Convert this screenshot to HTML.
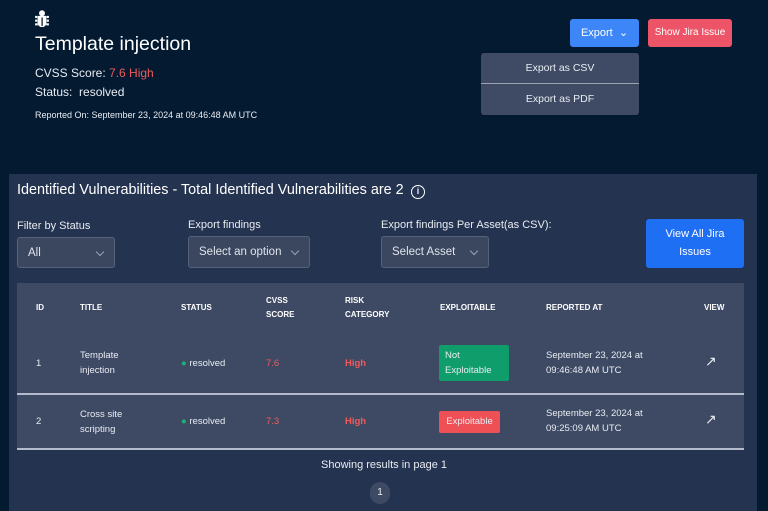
<!DOCTYPE html>
<html><head><meta charset="utf-8"><style>
*{margin:0;padding:0;box-sizing:border-box}
body{width:768px;height:511px;background:#041a31;color:#e8ecf2;font-family:"Liberation Sans",sans-serif;position:relative;overflow:hidden}
.a{position:absolute;white-space:nowrap}
.btn{position:absolute;border-radius:3px;color:#fff;font-size:11px;text-align:center}
.sel{position:absolute;background:#3a475e;border:1px solid #56627a;border-radius:3px;font-size:11.5px;color:#dfe4ec;padding-left:10px;line-height:30px}
.sel:after{content:"";position:absolute;right:11px;top:11px;width:5px;height:5px;border-right:1px solid #9aa3b3;border-bottom:1px solid #9aa3b3;transform:rotate(45deg)}
.th{position:absolute;font-size:8px;font-weight:bold;color:#fff;line-height:14px}
.td{position:absolute;font-size:9.5px;color:#e8ecf2;line-height:15px}
.red{color:#ef5b5b}
</style></head><body>
<svg class="a" style="left:34px;top:9px" width="16" height="18" viewBox="0 0 13 17"><g fill="#fff"><circle cx="6.5" cy="4" r="2.8"/><path d="M2.3 6.5h8.4v6.5a4.2 4.2 0 0 1-8.4 0z"/><rect x="0" y="6.5" width="2" height="2"/><rect x="11" y="6.5" width="2" height="2"/><rect x="0" y="10" width="2" height="2"/><rect x="11" y="10" width="2" height="2"/><rect x="0" y="13.5" width="2.5" height="2"/><rect x="10.5" y="13.5" width="2.5" height="2"/></g><rect x="6" y="8" width="1.2" height="8" fill="#041a31"/></svg>
<div class="a" style="left:35px;top:33px;font-size:19.5px;color:#fff">Template injection</div>
<div class="a" style="left:35px;top:66px;font-size:12px">CVSS Score: <span class="red">7.6 High</span></div>
<div class="a" style="left:35px;top:85px;font-size:12px">Status:&nbsp; resolved</div>
<div class="a" style="left:35px;top:110px;font-size:9px">Reported On: September 23, 2024 at 09:46:48 AM UTC</div>
<div class="btn" style="left:570px;top:19px;width:69px;height:28px;background:#3d86f7;line-height:28px">Export &nbsp;&#8964;</div>
<div class="btn" style="left:648px;top:19px;width:84px;height:28px;background:#ee5468;line-height:28px;font-size:10px">Show Jira Issue</div>
<div class="a" style="left:481px;top:53px;width:158px;height:62px;background:#3f4b64;border-radius:3px;font-size:10.5px;text-align:center">
<div style="line-height:30px;border-bottom:1px solid #9aa3b3">Export as CSV</div><div style="line-height:30px">Export as PDF</div></div>
<div class="a" style="left:9px;top:174px;width:748px;height:337px;background:#243350"></div>
<div class="a" style="left:17px;top:182px;font-size:14.4px;color:#fff">Identified Vulnerabilities - Total Identified Vulnerabilities are 2</div>
<div class="a" style="left:411px;top:185px;width:14px;height:14px;border:1.3px solid #fff;border-radius:50%;font-size:9px;text-align:center;line-height:11px;font-weight:bold">i</div>
<div class="a" style="left:17px;top:220px;font-size:11px">Filter by Status</div>
<div class="a" style="left:188px;top:219px;font-size:11px">Export findings</div>
<div class="a" style="left:381px;top:219px;font-size:11px">Export findings Per Asset(as CSV):</div>
<div class="sel" style="left:17px;top:237px;width:98px;height:31px">All</div>
<div class="sel" style="left:188px;top:236px;width:122px;height:32px">Select an option</div>
<div class="sel" style="left:381px;top:236px;width:108px;height:32px">Select Asset</div>
<div class="btn" style="left:646px;top:219px;width:98px;height:49px;background:#1f6ff5;font-size:11px;line-height:18px;padding-top:6px">View All Jira<br>Issues</div>
<div class="a" style="left:17px;top:283px;width:727px;height:166px;background:#3e4a64"></div>
<div class="a" style="left:17px;top:393px;width:727px;height:2px;background:#b4bccb"></div>
<div class="a" style="left:17px;top:448px;width:727px;height:2px;background:#b4bccb"></div>
<div class="th" style="left:36px;top:301px">ID</div>
<div class="th" style="left:80px;top:301px">TITLE</div>
<div class="th" style="left:181px;top:301px">STATUS</div>
<div class="th" style="left:266px;top:294px">CVSS<br>SCORE</div>
<div class="th" style="left:345px;top:294px">RISK<br>CATEGORY</div>
<div class="th" style="left:440px;top:301px">EXPLOITABLE</div>
<div class="th" style="left:546px;top:301px">REPORTED AT</div>
<div class="th" style="left:704px;top:301px">VIEW</div>
<div class="td" style="left:36px;top:356px">1</div>
<div class="td" style="left:80px;top:348px">Template<br>injection</div>
<div class="td" style="left:181px;top:356px"><span style="color:#19b07a">●</span> resolved</div>
<div class="td red" style="left:266px;top:356px">7.6</div>
<div class="td red" style="left:345px;top:356px;font-weight:bold">High</div>
<div class="td" style="left:439px;top:345px;width:70px;height:36px;background:#0f9d6b;border-radius:2px;padding:3px 0 0 6px">Not<br>Exploitable</div>
<div class="td" style="left:546px;top:348px">September 23, 2024 at<br>09:46:48 AM UTC</div>
<div class="td" style="left:705px;top:354px;font-size:14px">↗</div>
<div class="td" style="left:36px;top:414px">2</div>
<div class="td" style="left:80px;top:407px">Cross site<br>scripting</div>
<div class="td" style="left:181px;top:414px"><span style="color:#19b07a">●</span> resolved</div>
<div class="td red" style="left:266px;top:414px">7.3</div>
<div class="td red" style="left:345px;top:414px;font-weight:bold">High</div>
<div class="td" style="left:439px;top:411px;width:61px;height:22px;background:#ee5056;border-radius:2px;text-align:center;line-height:22px">Exploitable</div>
<div class="td" style="left:546px;top:406px">September 23, 2024 at<br>09:25:09 AM UTC</div>
<div class="td" style="left:705px;top:412px;font-size:14px">↗</div>
<div class="a" style="left:0;width:768px;top:459px;text-align:center;font-size:11px">Showing results in page 1</div>
<div class="a" style="left:370px;top:482px;width:20px;height:22px;border-radius:10px;background:#3e4a64;font-size:10px;text-align:center;line-height:22px">1</div>
</body></html>
